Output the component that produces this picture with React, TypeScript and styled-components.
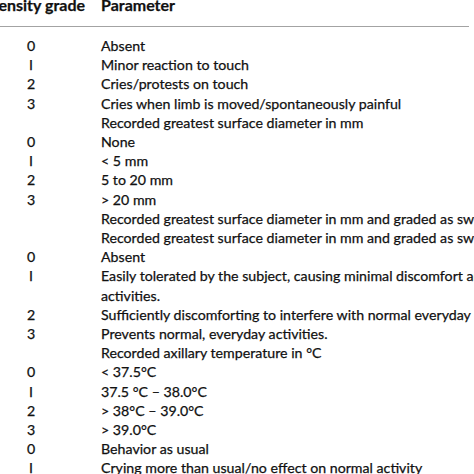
import React, { FC } from 'react';
import styled, { createGlobalStyle } from 'styled-components';

interface Row {
  grade: string;
  text: React.ReactNode;
}

const rows: Row[] = [
  { grade: '0', text: 'Absent' },
  { grade: 'I', text: 'Minor reaction to touch' },
  { grade: '2', text: 'Cries/protests on touch' },
  { grade: '3', text: 'Cries when limb is moved/spontaneously painful' },
  { grade: '', text: 'Recorded greatest surface diameter in mm' },
  { grade: '0', text: 'None' },
  { grade: 'I', text: '< 5 mm' },
  { grade: '2', text: '5 to 20 mm' },
  { grade: '3', text: '> 20 mm' },
  { grade: '', text: 'Recorded greatest surface diameter in mm and graded as swelling' },
  { grade: '', text: 'Recorded greatest surface diameter in mm and graded as swelling' },
  { grade: '0', text: 'Absent' },
  {
    grade: 'I',
    text: (
      <>
        Easily tolerated by the subject, causing minimal discomfort and not interfering with
        <br />
        activities.
      </>
    ),
  },
  { grade: '2', text: 'Sufficiently discomforting to interfere with normal everyday activities.' },
  { grade: '3', text: 'Prevents normal, everyday activities.' },
  { grade: '', text: 'Recorded axillary temperature in °C' },
  { grade: '0', text: '< 37.5°C' },
  { grade: 'I', text: '37.5 °C – 38.0°C' },
  { grade: '2', text: '> 38°C – 39.0°C' },
  { grade: '3', text: '> 39.0°C' },
  { grade: '0', text: 'Behavior as usual' },
  { grade: 'I', text: 'Crying more than usual/no effect on normal activity' },
];

const App: FC = () => (
  <>
    <GlobalStyle />
    <Page>
      <Table>
        <HeadRow>
          <HeadCell>Intensity grade</HeadCell>
          <HeadCell>Parameter</HeadCell>
        </HeadRow>
        <Body>
          {rows.map((row, i) => (
            <BodyRow key={i}>
              <Grade>{row.grade}</Grade>
              <Param>{row.text}</Param>
            </BodyRow>
          ))}
        </Body>
      </Table>
    </Page>
  </>
);

const GlobalStyle = createGlobalStyle`
  html, body {
    margin: 0;
    padding: 0;
    background: #ffffff;
    overflow: hidden;
  }
  body {
    width: 474px;
    height: 474px;
    font-family: Lato, "Open Sans", sans-serif;
    color: #111111;
    -webkit-text-stroke: 0.25px #111111;
  }
`;

const Page = styled.div`
  width: 474px;
  height: 474px;
  overflow: hidden;
`;

const Table = styled.div`
  margin-left: -21px;
  margin-top: -5px;
  width: 700px;
`;

const HeadRow = styled.div`
  display: grid;
  grid-template-columns: 104px 1fr;
  column-gap: 18px;
  padding-bottom: 11px;
  border-bottom: 1.5px solid #a3a3a3;
  margin-right: 210px;
`;

const HeadCell = styled.div`
  font-weight: 700;
  font-size: 16px;
  line-height: 20px;
  white-space: nowrap;
`;

const Body = styled.div`
  padding-top: 9px;
`;

const BodyRow = styled.div`
  display: grid;
  grid-template-columns: 104px 1fr;
  column-gap: 18px;
  font-size: 14.2px;
  line-height: 19.2px;
`;

const Grade = styled.div`
  text-align: center;
`;

const Param = styled.div`
  white-space: nowrap;
`;

export default App;
